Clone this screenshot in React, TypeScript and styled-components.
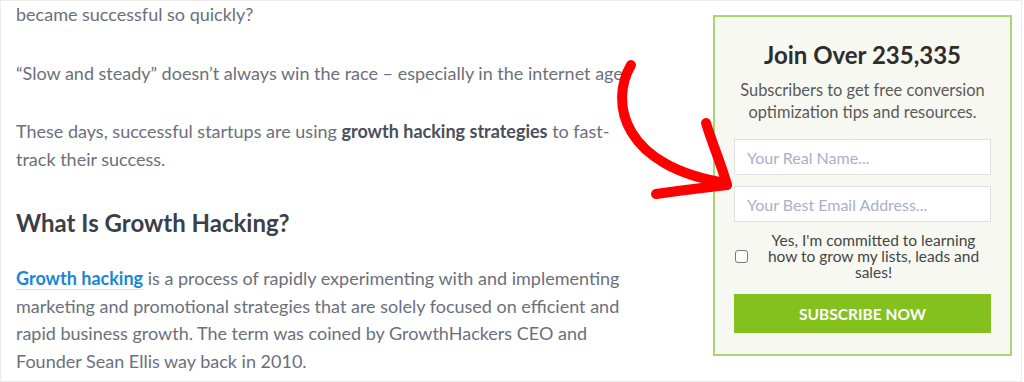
import React from 'react';
import styled, { createGlobalStyle } from 'styled-components';

const GlobalStyle = createGlobalStyle`
  html, body {
    margin: 0;
    padding: 0;
    background: #fff;
  }
  body {
    font-family: Lato, 'Open Sans', sans-serif;
  }
`;

export default function App() {
  return (
    <>
      <GlobalStyle />
      <Frame>
        <Article>
          <Para>became successful so quickly?</Para>
          <Para>“Slow and steady” doesn’t always win the race – especially in the internet age.</Para>
          <Para>
            These days, successful startups are using <strong>growth hacking strategies</strong> to fast-track
            their success.
          </Para>
          <Heading>What Is Growth Hacking?</Heading>
          <Para>
            <Link href='#'>Growth hacking</Link> is a process of rapidly experimenting with and implementing
            marketing and promotional strategies that are solely focused on efficient and rapid business growth.
            The term was coined by GrowthHackers CEO and Founder Sean Ellis way back in 2010.
          </Para>
        </Article>

        <Sidebar>
          <Title>Join Over 235,335</Title>
          <Subtitle>
            Subscribers to get free conversion
            <br />
            optimization tips and resources.
          </Subtitle>
          <Input type='text' placeholder='Your Real Name...' />
          <Input type='email' placeholder='Your Best Email Address...' $gap={11} />
          <ConsentRow>
            <Checkbox type='checkbox' />
            <ConsentText>Yes, I'm committed to learning how to grow my lists, leads and sales!</ConsentText>
          </ConsentRow>
          <SubscribeButton type='button'>SUBSCRIBE NOW</SubscribeButton>
        </Sidebar>

        <Arrow width='140' height='160' viewBox='0 0 140 160'>
          <path d='M30 14 C 8 52, 22 116, 125 132' />
          <path d='M105 72 C 112 95, 121 115, 126 134' />
          <path d='M126 134 C 100 137, 76 140, 55 143' />
        </Arrow>
      </Frame>
    </>
  );
}

const Frame = styled.div`
  position: relative;
  box-sizing: border-box;
  width: 1022px;
  height: 382px;
  border: 1px solid #ececec;
  display: flex;
  align-items: flex-start;
  padding: 0 9px 0 15px;
  overflow: hidden;
`;

const Article = styled.article`
  width: 628px;
  color: #6b707a;
  font-size: 18px;

  strong {
    color: #4a4f5a;
    font-weight: 700;
  }
`;

const Para = styled.p`
  margin: 0 0 31px;
  line-height: 27.5px;
`;

const Heading = styled.h2`
  margin: 34px 0 26px;
  font-size: 24px;
  line-height: 32px;
  font-weight: 700;
  color: #3a3f4a;
`;

const Link = styled.a`
  color: #1b87d4;
  font-weight: 700;
  text-decoration: none;
  border-bottom: 1px solid #cfe3f5;
`;

const Sidebar = styled.aside`
  margin-left: auto;
  margin-top: 14px;
  box-sizing: border-box;
  width: 299px;
  height: 341px;
  flex-shrink: 0;
  border: 2px solid #a9d66f;
  background: #f8f8f2;
  padding: 24px 19px 0;
  display: flex;
  flex-direction: column;
  align-items: stretch;
`;

const Title = styled.h3`
  margin: 0;
  text-align: center;
  font-size: 24px;
  line-height: 28px;
  font-weight: 700;
  color: #2d2d2d;
`;

const Subtitle = styled.p`
  margin: 10px 0 0;
  text-align: center;
  font-size: 16.4px;
  line-height: 22px;
  color: #5a5a5a;
`;

const Input = styled.input<{ $gap?: number }>`
  box-sizing: border-box;
  margin: ${p => p.$gap ?? 16}px 0 0;
  height: 36px;
  width: 100%;
  padding: 0 12px;
  border: 1px solid #e0e0e0;
  background: #fff;
  font-family: inherit;
  font-size: 16px;
  color: #444;

  &::placeholder {
    color: #a8b1c6;
  }
`;

const ConsentRow = styled.label`
  margin-top: 10px;
  display: flex;
  align-items: center;
`;

const Checkbox = styled.input`
  appearance: none;
  margin: 0 0 0 1px;
  width: 13px;
  height: 13px;
  flex-shrink: 0;
  border: 1.5px solid #7a7a7a;
  border-radius: 3px;
  background: #fff;
  box-sizing: border-box;
`;

const ConsentText = styled.span`
  flex: 1;
  text-align: center;
  font-size: 15.5px;
  line-height: 16px;
  color: #454545;
  padding: 0 6px 0 14px;
`;

const SubscribeButton = styled.button`
  margin-top: 14px;
  height: 39px;
  width: 100%;
  border: none;
  background: #84c11f;
  color: #fff;
  font-family: inherit;
  font-size: 15.5px;
  font-weight: 700;
  cursor: pointer;
`;

const Arrow = styled.svg`
  position: absolute;
  left: 600px;
  top: 50px;
  z-index: 2;
  fill: none;
  stroke: #fe0000;
  stroke-width: 10;
  stroke-linecap: round;
  stroke-linejoin: round;
`;
